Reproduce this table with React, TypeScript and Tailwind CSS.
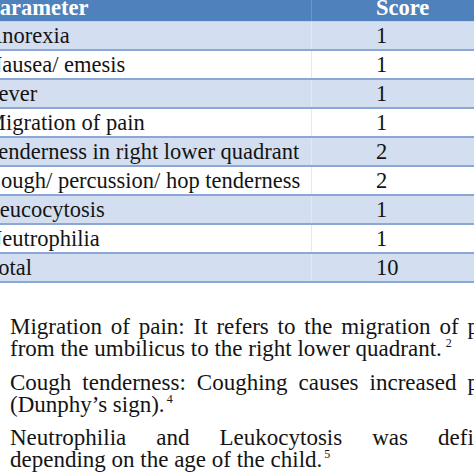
import React from "react";

const rows = [
  { name: "Anorexia", score: "1" },
  { name: "Nausea/ emesis", score: "1" },
  { name: "Fever", score: "1" },
  { name: "Migration of pain", score: "1" },
  { name: "Tenderness in right lower quadrant", score: "2" },
  { name: "Cough/ percussion/ hop tenderness", score: "2" },
  { name: "Leucocytosis", score: "1" },
  { name: "Neutrophilia", score: "1" },
  { name: "Total", score: "10" },
];

export default function App() {
  return (
    <div className="w-[474px] h-[474px] overflow-hidden bg-white text-[#141414] font-['Liberation_Serif','Times_New_Roman',serif]">
      {/* table */}
      <div className="-ml-[22px] w-[540px] text-[22.5px]">
        <div className="grid grid-cols-[334px_1fr] h-[22px] bg-[#4f81bd] border-b border-[#c3d2ea] text-white font-bold leading-[16px]">
          <div className="pl-[8px] border-r border-[#6e96c9]">Parameter</div>
          <div className="pl-[64px]">Score</div>
        </div>
        {rows.map((r, i) => (
          <div
            key={r.name}
            className={
              i % 2 === 0
                ? "grid grid-cols-[334px_1fr] h-[29px] leading-[27px] border-b-2 border-[#8ba7d5] bg-[#d3dff0]"
                : "grid grid-cols-[334px_1fr] h-[29px] leading-[27px] border-b-2 border-[#8ba7d5] bg-white"
            }
          >
            <div className="pl-[8px] border-r border-[#e2e9f5] whitespace-nowrap">{r.name}</div>
            <div className="pl-[64px]">{r.score}</div>
          </div>
        ))}
      </div>

      {/* notes */}
      <div className="ml-[10px] w-[497px] mt-[33px] text-[23px] leading-[22px] text-justify">
        <p>
          Migration of pain: It refers to the migration of pain from the umbilicus to the right lower quadrant.
          <sup className="text-[12px] top-[-9px] ml-[4px]">2</sup>
        </p>
        <p className="mt-[12px]">
          Cough tenderness: Coughing causes increased pain (Dunphy’s sign).
          <sup className="text-[12px] top-[-9px] ml-[2px]">4</sup>
        </p>
        <p className="mt-[11px]">
          Neutrophilia and Leukocytosis was defined depending on the age of the child.
          <sup className="text-[12px] top-[-9px] ml-[2px]">5</sup>
        </p>
      </div>
    </div>
  );
}
